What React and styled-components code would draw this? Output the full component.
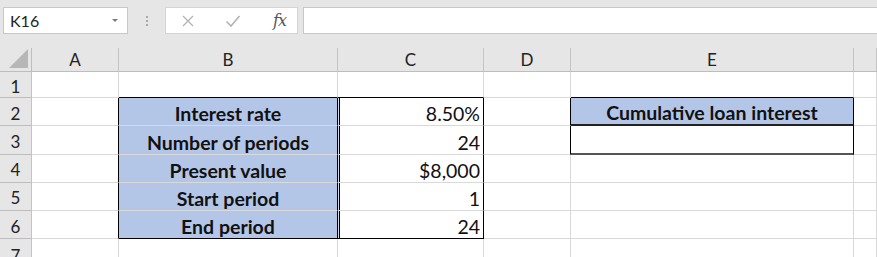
import React from 'react';
import styled, { createGlobalStyle } from 'styled-components';

const GlobalStyle = createGlobalStyle`
    html, body {
        margin: 0;
        padding: 0;
        background: #e6e6e6;
        font-family: Lato, "Liberation Sans", sans-serif;
    }
`;

const Page = styled.div`
    width: 877px;
    height: 257px;
    overflow: hidden;
    background: #e6e6e6;
`;

const Toolbar = styled.div`
    display: flex;
    align-items: stretch;
    height: 27px;
    padding: 7px 0 14px 3px;
`;

const NameBox = styled.div`
    width: 125px;
    box-sizing: border-box;
    display: flex;
    align-items: center;
    justify-content: space-between;
    padding: 0 9px 0 6px;
    background: #fff;
    border: 1px solid #c8c8c8;
    font-size: 16px;
    color: #222;
`;

const Caret = styled.span`
    width: 0;
    height: 0;
    border-left: 3px solid transparent;
    border-right: 3px solid transparent;
    border-top: 3px solid #7a7a7a;
`;

const Grip = styled.div`
    width: 37px;
    display: flex;
    flex-direction: column;
    align-items: center;
    justify-content: center;
    gap: 2px;

    span {
        width: 2px;
        height: 2px;
        background: #a8a8a8;
    }
`;

const FxButtons = styled.div`
    width: 133px;
    box-sizing: border-box;
    display: flex;
    align-items: center;
    gap: 30px;
    padding: 0 0 0 15px;
    background: #fff;
    border: 1px solid #d4d4d4;
`;

const Fx = styled.span`
    font-family: "DejaVu Serif", "Liberation Serif", serif;
    font-style: italic;
    font-size: 16px;
    letter-spacing: -1px;
    color: #555;
    margin-left: 2px;
`;

const FormulaInput = styled.div`
    flex: 1;
    margin-left: 5px;
    background: #fff;
    border: 1px solid #c8c8c8;
    border-right: none;
`;

const Grid = styled.div`
    display: grid;
    grid-template-columns: 32px 87px 219px 146px 87px 283px 1fr;
    grid-template-rows: 24px 26px repeat(5, 28.25px) 30px;
    background: #fff;
`;

const Head = styled.div`
    box-sizing: border-box;
    display: flex;
    align-items: center;
    justify-content: center;
    background: #e6e6e6;
    color: #222;
    font-size: 17px;
    border-right: 1px solid ${(p) => (p.$corner ? '#bdbdbd' : '#c4c4c4')};
    border-bottom: 1px solid #bdbdbd;
    padding-top: ${(p) => (p.$row ? '3px' : '0')};
`;

const Corner = styled(Head)`
    position: relative;

    &::after {
        content: '';
        position: absolute;
        right: 3px;
        bottom: 3px;
        border-left: 19px solid transparent;
        border-bottom: 19px solid #b7b7b7;
    }
`;

const Cell = styled.div`
    box-sizing: border-box;
    display: flex;
    align-items: flex-end;
    justify-content: ${(p) => p.$align};
    padding: 0 3px 0 3px;
    font-size: 19.5px;
    line-height: 23px;
    font-weight: ${(p) => (p.$bold ? 700 : 400)};
    color: #111;
    background: ${(p) => (p.$fill ? '#b4c6e7' : '#fff')};
    border-right: 1px solid ${(p) => p.$right};
    border-bottom: ${(p) => p.$bottom};
    box-shadow: ${(p) => (p.$double ? 'inset 1px 0 0 #d5dceb, inset 2px 0 0 #000' : 'none')};
    white-space: nowrap;
`;

const columns = ['A', 'B', 'C', 'D', 'E', ''];

// ranges with a black outline: [row0, row1, col0, col1], col 1 = A
const boxes = [
    [2, 6, 2, 2],
    [2, 6, 3, 3],
    [2, 2, 5, 5],
    [3, 3, 5, 5],
];

const cells = {
    '2-2': { text: 'Interest rate', bold: true, fill: true, align: 'center' },
    '3-2': { text: 'Number of periods', bold: true, fill: true, align: 'center' },
    '4-2': { text: 'Present value', bold: true, fill: true, align: 'center' },
    '5-2': { text: 'Start period', bold: true, fill: true, align: 'center' },
    '6-2': { text: 'End period', bold: true, fill: true, align: 'center' },
    '2-3': { text: '8.50%' },
    '3-3': { text: '24' },
    '4-3': { text: '$8,000' },
    '5-3': { text: '1' },
    '6-3': { text: '24' },
    '2-5': { text: 'Cumulative loan interest', bold: true, fill: true, align: 'center' },
};

const rightEdge = (r, c) =>
    boxes.some(([r0, r1, c0, c1]) => r >= r0 && r <= r1 && (c === c1 || c + 1 === c0));

const bottomEdge = (r, c) =>
    boxes.some(([r0, r1, c0, c1]) => c >= c0 && c <= c1 && (r === r1 || r + 1 === r0));

const bottomStyle = (r, c) => {
    if (c === 5 && (r === 2 || r === 3)) return r === 2 ? '2px solid #222' : '2px solid #555';
    return bottomEdge(r, c) ? '1px solid #000' : '1px solid #d9d9d9';
};

const App = () => {
    const rows = [1, 2, 3, 4, 5, 6, 7];

    return (
        <Page>
            <GlobalStyle />
            <Toolbar>
                <NameBox>
                    K16
                    <Caret />
                </NameBox>
                <Grip>
                    <span />
                    <span />
                    <span />
                </Grip>
                <FxButtons>
                    <svg width="14" height="14" viewBox="0 0 14 14">
                        <path d="M2 2 L12 12 M12 2 L2 12" stroke="#b3b3b3" strokeWidth="1.3" fill="none" />
                    </svg>
                    <svg width="16" height="14" viewBox="0 0 16 14">
                        <path d="M1.5 7.5 L6 12 L14.5 2" stroke="#b3b3b3" strokeWidth="1.6" fill="none" />
                    </svg>
                    <Fx>fx</Fx>
                </FxButtons>
                <FormulaInput />
            </Toolbar>

            <Grid>
                <Corner $corner />
                {columns.map((col, i) => (
                    <Head key={i}>{col}</Head>
                ))}

                {rows.map((r) => (
                    <React.Fragment key={r}>
                        <Head $row>{r}</Head>
                        {columns.map((_, i) => {
                            const c = i + 1;
                            const data = cells[`${r}-${c}`] || {};
                            return (
                                <Cell
                                    key={c}
                                    $bold={data.bold}
                                    $fill={data.fill}
                                    $align={data.align === 'center' ? 'center' : 'flex-end'}
                                    $right={rightEdge(r, c) ? '#000' : '#d9d9d9'}
                                    $bottom={bottomStyle(r, c)}
                                    $double={c === 3 && r >= 2 && r <= 6}
                                >
                                    {data.text}
                                </Cell>
                            );
                        })}
                    </React.Fragment>
                ))}
            </Grid>
        </Page>
    );
};

export default App;
